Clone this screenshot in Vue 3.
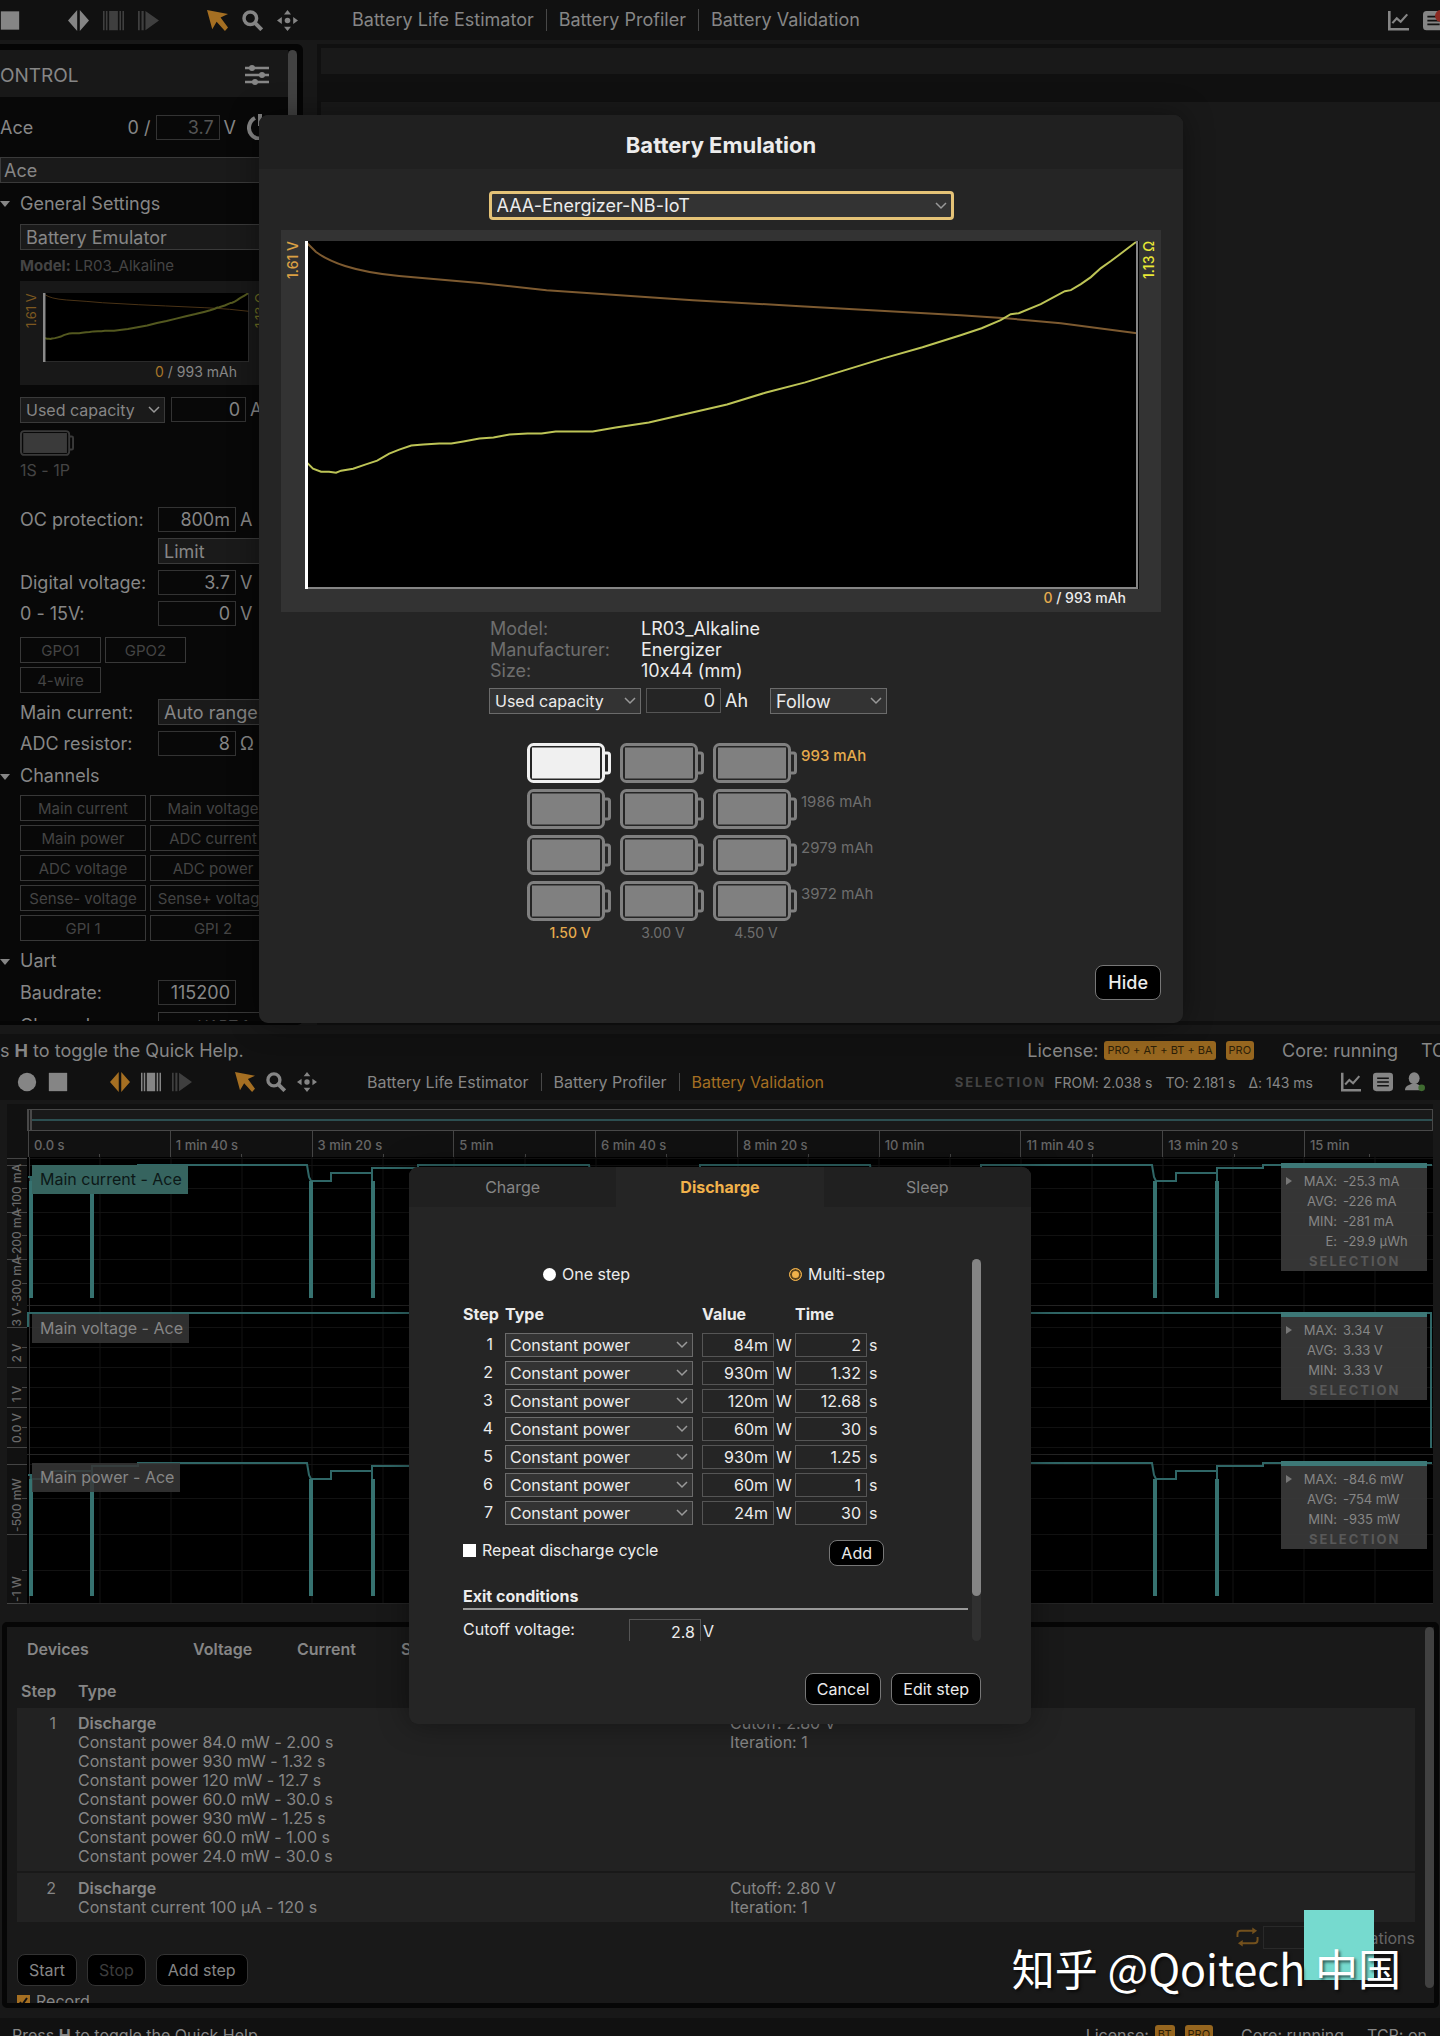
<script setup>
const channels = ['Main current', 'Main voltage', 'Main power', 'ADC current', 'ADC voltage', 'ADC power', 'Sense- voltage', 'Sense+ voltage', 'GPI 1', 'GPI 2']
const ticks = ['0.0 s', '1 min 40 s', '3 min 20 s', '5 min', '6 min 40 s', '8 min 20 s', '10 min', '11 min 40 s', '13 min 20 s', '15 min']
const packRows = ['993 mAh', '1986 mAh', '2979 mAh', '3972 mAh']
const packCols = ['1.50 V', '3.00 V', '4.50 V']
const multi = [['84m', '2'], ['930m', '1.32'], ['120m', '12.68'], ['60m', '30'], ['930m', '1.25'], ['60m', '1'], ['24m', '30']]
const steps = [
  {
    lines: ['Constant power 84.0 mW - 2.00 s', 'Constant power 930 mW - 1.32 s', 'Constant power 120 mW - 12.7 s', 'Constant power 60.0 mW - 30.0 s', 'Constant power 930 mW - 1.25 s', 'Constant power 60.0 mW - 1.00 s', 'Constant power 24.0 mW - 30.0 s'],
  },
  { lines: ['Constant current 100 µA - 120 s'] },
]

const voltageCurve = 'M2 2 L11 11 Q22 19 40 25 Q62 32 94 35 L174 42 L241 49 L387 59 L494 65 L654 74 L699 77 L754 82 L830 92'
const resistanceCurve = 'M2 221 L8 227 L16 230 L24 230 L31 231 L36 229 L48 227 L60 223 L72 219 L84 212 L94 208 L106 204 L118 203 L134 202 L146 202 L158 200 L174 197 L188 196 L204 193 L222 192 L236 192 L250 190 L272 190 L287 190 L310 186 L343 181 L382 172 L421 163 L460 151 L499 141 L538 129 L577 117 L616 106 L654 94 L675 87 L694 79 L704 73 L712 72 L734 63 L758 50 L764 49 L774 43 L784 36 L794 27 L804 20 L812 14 L829 1'

// One burst: drop, spike, two recovery steps, second spike, then back to idle.
const burst = (x) => `H${x} L${x + 2} 20 L${x + 4} 24 V141 V24 H${x + 24} V16 H${x + 65} V141 V11 H${x + 111} V8 `
const loadTrace = 'M1 20 H4 V141 V24 H24 V16 H65 V141 V11 H111 V8 ' + [280, 562, 843, 1125].map(burst).join('') + 'H1405'
const spikes = [4, 65, 284, 346, 566, 628, 847, 909, 1128, 1190]

const rows = [
  {
    name: 'Main current - Ace', trace: loadTrace, spikes, spikeTop: 14, active: true,
    major: [1, 8, 55, 102], minor: [31, 78, 126],
    labels: [['-100 mA', 31], ['-200 mA', 77], ['-300 mA', 125]],
    stats: [['MAX:', '-25.3 mA'], ['AVG:', '-226 mA'], ['MIN:', '-281 mA'], ['E:', '-29.9 µWh']],
  },
  {
    name: 'Main voltage - Ace', trace: 'M1 21 V7 H1404 V142', spikes: [], spikeTop: 0,
    major: [21, 61, 101, 141], minor: [41, 81, 121],
    labels: [['3 V', 11], ['2 V', 47], ['1 V', 88], ['0.0 V', 122]],
    stats: [['MAX:', '3.34 V'], ['AVG:', '3.33 V'], ['MIN:', '3.33 V']],
  },
  {
    name: 'Main power - Ace', trace: loadTrace, spikes, spikeTop: 14,
    major: [9, 79, 148], minor: [43, 115],
    labels: [['-500 mW', 50], ['-1 W', 134]],
    stats: [['MAX:', '-84.6 mW'], ['AVG:', '-754 mW'], ['MIN:', '-935 mW']],
  },
]
const gridX = Array.from({ length: 19 }, (_, i) => Math.round(2 + (i + 1) * 70.85))
</script>

<template>
  <svg class="defs" aria-hidden="true">
    <symbol id="i-dot" viewBox="0 0 24 24"><circle cx="12" cy="12" r="11" /></symbol>
    <symbol id="i-square" viewBox="0 0 24 24"><path d="M1 1h22v22H1z" /></symbol>
    <symbol id="i-split" viewBox="0 0 24 24"><path d="M10.500 0v24L0 12zM13.500 0v24L24 12z" /></symbol>
    <symbol id="i-bars" viewBox="0 0 24 24"><path d="M0 1h1.800v22H0zM3.300 1h1.800v22H3.300zM7 1h10v22H7zM18.800 1h1.800v22h-1.800zM22.200 1H24v22h-1.800z" /></symbol>
    <symbol id="i-step" viewBox="0 0 24 24"><path d="M0 1h2v22H0zM4 1h2.500v22H4zM8.500 1l15.500 11L8.500 23z" /></symbol>
    <symbol id="i-pointer" viewBox="0 0 24 24"><path d="M0 0l24 4.500-8.500 4L24 20l-3.500 4-9.500-10.500L6 22z" /></symbol>
    <symbol id="i-search" viewBox="0 0 24 24"><circle cx="9.500" cy="9.500" r="7.200" fill="none" stroke="currentColor" stroke-width="4" /><path d="M14.500 14.500l8 8" stroke="currentColor" stroke-width="4.500" /></symbol>
    <symbol id="i-move" viewBox="0 0 24 24"><circle cx="12" cy="12" r="3.200" /><path d="M12 0l4 5H8zM12 24l4-5H8zM0 12l5.500-4v8zM24 12l-5.500-4v8z" /></symbol>
    <symbol id="i-chart" viewBox="0 0 24 24"><path d="M1.500 1v21H24" fill="none" stroke="currentColor" stroke-width="3" /><path d="M5 15l5-5.500 4.500 4L22 5" fill="none" stroke="currentColor" stroke-width="2.500" /></symbol>
    <symbol id="i-list" viewBox="0 0 24 24"><rect x="0" y="1" width="24" height="22" rx="4" /><path d="M5 7.500h14M5 12h14M5 16.500h14" stroke="#111" stroke-width="2" /></symbol>
    <symbol id="i-user" viewBox="0 0 24 24"><ellipse cx="11" cy="7.500" rx="6.500" ry="7.200" /><path d="M0 22c0-6 5-6 8-8h6c3 2 7 2 7 8z" /><circle cx="20" cy="19" r="4" fill="#3f6b30" /></symbol>
    <symbol id="i-battery" viewBox="0 0 84 40">
      <rect x="1.500" y="1.500" width="75" height="37" rx="5" fill="none" stroke="currentColor" stroke-width="3" />
      <path d="M76.500 10h4q2 0 2 2v16q0 2-2 2h-4" fill="none" stroke="currentColor" stroke-width="3" />
      <rect x="5" y="4.500" width="68" height="31" />
    </symbol>
  </svg>

  <div class="page">
    <!-- Battery emulation screen -->
    <section class="screen">
      <header class="toolbar large">
        <div class="tools"><svg><use href="#i-square" /></svg></div>
        <div class="tools views">
          <svg><use href="#i-split" /></svg><svg class="off"><use href="#i-bars" /></svg><svg class="off"><use href="#i-step" /></svg>
        </div>
        <div class="tools modes">
          <svg class="amber"><use href="#i-pointer" /></svg><svg><use href="#i-search" /></svg><svg><use href="#i-move" /></svg>
        </div>
        <nav class="tabs"><a href="#">Battery Life Estimator</a><a href="#">Battery Profiler</a><a href="#">Battery Validation</a></nav>
        <div class="tools right">
          <svg><use href="#i-chart" /></svg>
          <span class="badged"><svg><use href="#i-list" /></svg><i></i></span>
        </div>
      </header>

      <div class="workspace">
        <aside class="control">
          <div class="control-main">
            <div class="control-head">
              <span>ONTROL</span>
              <svg viewBox="0 0 24 20"><path d="M0 3h24M0 10h24M0 17h24" stroke="currentColor" stroke-width="2.500" /><circle cx="7" cy="3" r="3" /><circle cx="17" cy="10" r="3" /><circle cx="10" cy="17" r="3" /></svg>
            </div>
            <div class="supply">
              <span>Ace</span>
              <label class="reading">0 / <input class="field w64 muted" value="3.7" aria-label="Main voltage" />V</label>
              <svg viewBox="0 0 26 26"><path d="M8 4a11 11 0 1 0 10 0" fill="none" stroke="currentColor" stroke-width="4" /><path d="M13 0v12" stroke="currentColor" stroke-width="4" /></svg>
            </div>
            <select class="select device" aria-label="Device"><option>Ace</option></select>
            <h3 class="group">General Settings</h3>
            <div class="inset">
              <select class="select" aria-label="Mode"><option>Battery Emulator</option></select>
              <p class="model"><b>Model:</b> LR03_Alkaline</p>
              <div class="mini">
                <div class="mini-row">
                  <span class="vert v">1.61 V</span>
                  <svg viewBox="0 0 832 347" preserveAspectRatio="none"><rect width="832" height="347" fill="#000" /><path :d="voltageCurve" stroke="#4a3316" /><path :d="resistanceCurve" stroke="#53581f" stroke-width="2" /><path d="M831 0V346H0" stroke="#3c3c3c" /><path class="cursor" d="M4 0V347" stroke="#8a8a8a" /></svg>
                  <span class="vert r">1.13 Ω</span>
                </div>
                <p><em>0</em> / 993 mAh</p>
              </div>
              <div class="capacity">
                <select class="select w145" aria-label="Capacity mode"><option>Used capacity</option></select>
                <label><input class="field w75" value="0" aria-label="Capacity" />Ah</label>
              </div>
              <svg class="cell"><use href="#i-battery" /></svg>
              <p class="config">1S - 1P</p>
              <div class="form">
                <label for="oc">OC protection:</label><div><input id="oc" class="field w78" value="800m" />A</div>
                <span></span><select class="select" aria-label="OC action"><option>Limit</option></select>
                <label for="dv">Digital voltage:</label><div><input id="dv" class="field w78" value="3.7" />V</div>
                <label for="rng">0 - 15V:</label><div><input id="rng" class="field w78" value="0" />V</div>
              </div>
              <div class="gpos"><button>GPO1</button><button>GPO2</button><button>4-wire</button></div>
              <div class="form">
                <label for="mc">Main current:</label><select id="mc" class="select"><option>Auto range</option></select>
                <label for="adc">ADC resistor:</label><div><input id="adc" class="field w78" value="8" />Ω</div>
              </div>
            </div>
            <h3 class="group">Channels</h3>
            <div class="inset channels"><button v-for="c in channels" :key="c">{{ c }}</button></div>
            <h3 class="group">Uart</h3>
            <div class="inset form uart">
              <label for="baud">Baudrate:</label><div><input id="baud" class="field w78" value="115200" /></div>
              <span>Channel:</span><button class="port">UART 1</button>
            </div>
          </div>
          <div class="control-scroll"></div>
        </aside>
        <main class="canvas"><div class="canvas-head"></div><div class="canvas-body"></div></main>
      </div>

      <footer class="status first">
        <p>s <b>H</b> to toggle the Quick Help.</p>
        <div class="state"><span>License:</span><mark>PRO + AT + BT + BA</mark><mark>PRO</mark><span class="core">Core: running</span><span class="tcp">TCP: on</span></div>
      </footer>

      <div class="overlay one">
        <div class="dialog emulation" role="dialog" aria-label="Battery Emulation">
          <h2>Battery Emulation</h2>
          <select class="select profile" aria-label="Battery profile"><option>AAA-Energizer-NB-IoT</option></select>
          <div class="graph">
            <div class="graph-row">
              <span class="vert v">1.61 V</span>
              <svg viewBox="0 0 832 347" preserveAspectRatio="none"><rect width="832" height="347" fill="#000" /><path :d="voltageCurve" stroke="#7d5a30" stroke-width="2" /><path :d="resistanceCurve" stroke="#bdc456" stroke-width="2" /><path d="M830 0V346H0" stroke="#858585" stroke-width="2" /><path d="M1 0V347" stroke="#fff" stroke-width="4" /></svg>
              <span class="vert r">1.13 Ω</span>
            </div>
            <p><em>0</em> / 993 mAh</p>
          </div>
          <dl><dt>Model:</dt><dd>LR03_Alkaline</dd><dt>Manufacturer:</dt><dd>Energizer</dd><dt>Size:</dt><dd>10x44 (mm)</dd></dl>
          <div class="params">
            <select class="select w152" aria-label="Capacity mode"><option>Used capacity</option></select>
            <label><input class="field w75" value="0" aria-label="Used capacity" />Ah</label>
            <select class="select w117" aria-label="Tracking"><option>Follow</option></select>
          </div>
          <div class="pack">
            <template v-for="(r, ri) in packRows" :key="r">
              <svg v-for="(c, ci) in packCols" :key="c" :class="{ lit: ri + ci === 0 }"><use href="#i-battery" /></svg>
              <span :class="{ amberlit: ri === 0 }">{{ r }}</span>
            </template>
            <small v-for="(c, ci) in packCols" :key="c" :class="{ amberlit: ci === 0 }">{{ c }}</small>
          </div>
          <div class="actions"><button class="btn big">Hide</button></div>
        </div>
      </div>
    </section>

    <!-- Battery validation screen -->
    <section class="screen">
      <header class="toolbar small">
        <div class="tools"><svg><use href="#i-dot" /></svg><svg><use href="#i-square" /></svg></div>
        <div class="tools views">
          <svg class="amber"><use href="#i-split" /></svg><svg><use href="#i-bars" /></svg><svg class="off"><use href="#i-step" /></svg>
        </div>
        <div class="tools modes">
          <svg class="amber"><use href="#i-pointer" /></svg><svg><use href="#i-search" /></svg><svg><use href="#i-move" /></svg>
        </div>
        <nav class="tabs"><a href="#">Battery Life Estimator</a><a href="#">Battery Profiler</a><a href="#" class="current">Battery Validation</a></nav>
        <p class="range"><b>SELECTION</b><span>FROM: 2.038 s</span><span>TO: 2.181 s</span><span>Δ: 143 ms</span></p>
        <div class="tools right"><svg><use href="#i-chart" /></svg><svg><use href="#i-list" /></svg><svg><use href="#i-user" /></svg></div>
      </header>

      <div class="scope">
        <div class="overview"><i></i></div>
        <div class="ruler"><span v-for="t in ticks" :key="t">{{ t }}</span></div>
        <div v-for="row in rows" :key="row.name" class="lane">
          <svg class="axis" viewBox="0 0 20 149">
            <path v-for="y in row.major" :key="'a' + y" :d="`M0 ${y}.500H20`" />
            <path v-for="y in row.minor" :key="'b' + y" :d="`M15 ${y}.500H20`" />
            <text v-for="l in row.labels" :key="l[0]" :transform="`translate(14 ${l[1]}) rotate(-90)`">{{ l[0] }}</text>
          </svg>
          <div class="plot">
            <svg viewBox="0 0 1406 149" preserveAspectRatio="none">
              <g stroke="#121212">
                <path v-for="x in gridX" :key="'x' + x" :d="`M${x} 0V149`" />
                <path v-for="y in [...row.major, ...row.minor]" :key="'y' + y" :d="`M2 ${y}.500H1406`" />
              </g>
              <path d="M0 148.500H1406" stroke="#242424" />
              <path d="M2.500 0V149" stroke="#303030" />
              <path :d="row.trace" fill="none" stroke="#2f6666" stroke-width="2" />
              <path v-for="x in row.spikes" :key="x" :d="`M${x} ${row.spikeTop + 10}V141`" stroke="#367270" stroke-width="4" />
            </svg>
            <span class="tag" :class="{ on: row.active }">{{ row.name }}</span>
            <div class="stats">
              <div v-for="s in row.stats" :key="s[0]"><span>{{ s[0] }}</span><span>{{ s[1] }}</span></div>
              <b>SELECTION</b>
            </div>
          </div>
        </div>
      </div>

      <div class="panel">
        <div class="panel-main">
          <div class="devices"><b>Devices</b><b>Voltage</b><b>Current</b><b>State</b></div>
          <table>
            <thead><tr><th>Step</th><th>Type</th><th></th></tr></thead>
            <tbody>
              <tr v-for="(s, i) in steps" :key="i">
                <td>{{ i + 1 }}</td>
                <td><b>Discharge</b><div v-for="(l, k) in s.lines" :key="k">{{ l }}</div></td>
                <td>Cutoff: 2.80 V<div>Iteration: 1</div></td>
              </tr>
            </tbody>
          </table>
          <div class="iterate">
            <svg viewBox="0 0 24 20"><path class="loop" d="M1.500 10V7q0-3.500 3.500-3.500h14M22.500 10v3q0 3.500-3.500 3.500H5" /><path d="M17 0l5 3.500L17 7zM7 13l-5 3.500L7 20z" /></svg>
            <label><input class="field" value="" aria-label="Iterations" />iterations</label>
          </div>
          <div class="run"><button class="btn">Start</button><button class="btn" disabled>Stop</button><button class="btn">Add step</button></div>
          <label class="record"><input type="checkbox" class="tick amberbox" checked />Record</label>
        </div>
        <div class="panel-scroll"></div>
      </div>

      <footer class="status second">
        <p>Press <b>H</b> to toggle the Quick Help.</p>
        <div class="state"><span>License:</span><mark>BT</mark><mark>PRO</mark><span class="core">Core: running</span><span class="tcp">TCP: on</span></div>
      </footer>

      <div class="overlay two">
        <div class="dialog step-editor" role="dialog" aria-label="Edit step">
          <div class="kinds"><button>Charge</button><button class="chosen">Discharge</button><button>Sleep</button></div>
          <div class="scroll">
            <div class="scroll-body">
              <div class="cycle-mode">
                <label><input type="radio" name="mode" />One step</label>
                <label><input type="radio" name="mode" checked />Multi-step</label>
              </div>
              <table class="multi">
                <thead><tr><th>Step</th><th>Type</th><th>Value</th><th>Time</th></tr></thead>
                <tbody>
                  <tr v-for="(m, i) in multi" :key="i">
                    <td>{{ i + 1 }}</td>
                    <td><select class="select" :aria-label="`Step ${i + 1} type`"><option>Constant power</option></select></td>
                    <td><label><input class="field w72" :value="m[0]" :aria-label="`Step ${i + 1} value`" />W</label></td>
                    <td><label><input class="field w72" :value="m[1]" :aria-label="`Step ${i + 1} time`" />s</label></td>
                  </tr>
                </tbody>
              </table>
              <div class="repeat">
                <label><input type="checkbox" class="tick" />Repeat discharge cycle</label>
                <button class="btn slim">Add</button>
              </div>
              <h4>Exit conditions</h4>
              <div class="cutoff"><label for="cut">Cutoff voltage:</label><input id="cut" class="field w72" value="2.8" />V</div>
            </div>
            <div class="track"><i></i></div>
          </div>
          <div class="actions"><button class="btn">Cancel</button><button class="btn">Edit step</button></div>
        </div>
      </div>

      <div class="brand-square"></div>
      <div class="watermark">知乎 @Qoitech 中国</div>
    </section>
  </div>
</template>

<style>
body { margin: 0; background: #181818; }
</style>

<style scoped>
* { box-sizing: border-box; }
.defs { position: absolute; width: 0; height: 0; }
.page { font-family: Inter, "Noto Sans CJK SC", sans-serif; font-size: 18px; font-feature-settings: "calt" 0; color: #868686; overflow: hidden; }
p, h2, h3, h4, dl, dd { margin: 0; }
em { font-style: normal; color: #a87628; }
svg { fill: currentColor; display: block; flex: none; }
button, input, select { font: inherit; color: inherit; margin: 0; padding: 0; }
.screen { position: relative; background: #181818; overflow: hidden; }

.toolbar { display: flex; align-items: center; background: #111; }
.toolbar.large { height: 40px; }
.toolbar.small { height: 36px; padding-left: 17px; }
.tools { display: flex; align-items: center; color: #858585; }
.tools .off { color: #3f3f3f; }
.tools .amber { color: #a56f22; }
.large .tools svg { width: 21px; height: 21px; }
.small .tools svg { width: 20px; height: 20px; }
.large .tools { gap: 14px; }
.small .tools { gap: 11px; }
.large .tools:first-child svg { width: 20px; }
.large .views { margin-left: 48px; }
.large .modes { margin-left: 48px; }
.small .views { margin-left: 42px; }
.small .modes { margin-left: 43px; }
.tabs { display: flex; align-items: center; }
.tabs a { color: inherit; text-decoration: none; border-left: 1px solid #484848; }
.tabs a.current { color: #a56f22; }
.large .tabs { margin-left: 41px; font-size: 18px; }
.large .tabs a { padding: 0 12px; line-height: 22px; }
.small .tabs { margin-left: 37px; font-size: 16px; }
.small .tabs a { padding: 0 12px; line-height: 18px; }
.toolbar .tabs a:first-child { border-color: transparent; }
.tools.right { margin-left: auto; }
.large .tools.right { margin-right: -4px; }
.badged { position: relative; }
.badged i { position: absolute; top: 0; right: -3px; width: 12px; height: 12px; border-radius: 6px; background: #8c2a22; }
.range { display: flex; gap: 13px; margin-left: auto; font-size: 14px; }
.range b { color: #444; letter-spacing: 2px; margin-right: -5px; font-size: 13px; line-height: 17px; }
.small .tools.right { margin-left: 28px; margin-right: 15px; gap: 12px; }

.select { appearance: none; display: block; height: 26px; border: 1px solid #3a3a3a; border-radius: 0; padding: 0 5px; color: inherit;
  background: #1a1a1a url("data:image/svg+xml,%3Csvg xmlns='http://www.w3.org/2000/svg' width='12' height='8'%3E%3Cpath d='M1 1l5 5 5-5' fill='none' stroke='%23999' stroke-width='1.500'/%3E%3C/svg%3E") no-repeat right 4px center; }
.field { height: 25px; border: 1px solid #333; background: transparent; text-align: right; padding: 0 5px; margin-right: 4px; outline: 0; }
.field.muted { color: #555; }
.w64 { width: 64px; }
.w72 { width: 72px; }
.w75 { width: 75px; }
.w78 { width: 78px; }
.w117 { width: 117px; }
.w145 { width: 145px; font-size: 16px; }
.w152 { width: 152px; font-size: 16px; }

.workspace { display: flex; gap: 14px; padding-top: 4px; }
.control { display: flex; width: 303px; height: 981px; flex: none; background: #050505; padding: 6px 6px 4px 0; border-radius: 0 6px 6px 0; }
.control-main { flex: 1; overflow: hidden; white-space: nowrap; background: #080808; }
.control-scroll { width: 9px; border-radius: 5px; background: #424242; height: 340px; }
.control-head { display: flex; justify-content: space-between; align-items: center; height: 47px; padding: 3px 19px 0 0; background: #181818; font-size: 19px; }
.control-head svg { width: 24px; height: 20px; }
.supply { display: flex; align-items: center; height: 60px; }
.supply .reading { margin-left: auto; margin-right: 11px; }
.supply svg { width: 26px; height: 26px; margin-right: 15px; }
.device { width: 100%; padding-left: 3px; }
.group { position: relative; display: flex; align-items: center; height: 41px; padding-left: 20px; font-size: 18px; font-weight: 400; }
.inset + .group { height: 39px; }
.group::before { content: ""; position: absolute; left: 0; top: 18px; border: 5px solid transparent; border-top: 6px solid #868686; border-bottom: 0; }
.inset { padding-left: 20px; }
.inset > .select { width: 100%; }
.model { font-size: 15px; line-height: 31px; color: #444; }
.mini { background: #181818; height: 104px; padding: 12px 0 0 4px; }
.mini-row { display: flex; gap: 4px; }
.mini svg { width: 206px; height: 69px; }
.mini svg path, .graph svg path { fill: none; vector-effect: non-scaling-stroke; }
.mini .cursor { stroke-width: 3; }
.mini p { font-size: 14px; line-height: 19px; width: 213px; text-align: right; }
.vert { writing-mode: vertical-rl; transform: rotate(180deg); text-align: right; line-height: 15px; }
.mini .vert { font-size: 13px; }
.mini .v { color: #7d5820; }
.mini .r { color: #6c6c22; }
.capacity { display: flex; gap: 6px; padding-top: 12px; height: 38px; }
.cell { width: 54px; height: 26px; margin-top: 7px; color: #3a3a3a; }
.config { font-size: 16px; line-height: 28px; color: #444; height: 51px; }
.form { display: grid; grid-template-columns: 138px 1fr; row-gap: 6px; align-items: center; }
.form > * { height: 25px; line-height: 25px; }
.form > .select { height: 26px; }
.form > div { display: flex; }
.gpos, .channels { display: grid; gap: 4px; }
.gpos { grid-template-columns: 81px 81px; padding: 11px 0 6px; }
.gpos button, .channels button, .port { height: 26px; border: 1px solid #383838; background: none; color: #444; font-size: 15px; }
.channels { grid-template-columns: 126px 126px; }
.uart { row-gap: 7px; }

.canvas { flex: 1; display: flex; flex-direction: column; background: #101010; padding: 4px 0 4px 4px; }
.canvas-head { height: 26px; background: #191919; }
.canvas-body { flex: 1; margin-top: 28px; background: #191919; }

.status { display: flex; justify-content: space-between; background: #111; }
.status.first { height: 30px; margin-top: 9px; line-height: 34px; }
.status.second { height: 18px; overflow: hidden; line-height: 34px; font-size: 16px; padding: 0 13px 0 12px; }
.state { display: flex; white-space: nowrap; }
mark { align-self: flex-start; background: #96661f; color: #2c2008; border-radius: 3px; font-size: 11px; line-height: 19px; padding: 0 3px; margin: 7px 0 0 10px; }
.state span + mark { margin-left: 6px; }
.core { margin-left: 28px; }
.tcp { margin-left: 23px; }
.first .tcp { width: 19px; overflow: hidden; }

.overlay { position: absolute; inset: 0; display: flex; justify-content: center; align-items: flex-start; }
.overlay.one { padding: 115px 0 0 2px; }
.overlay.two { padding-top: 103px; }
.dialog { background: #252525; color: #ececec; overflow: hidden; box-shadow: 0 0 30px rgba(0, 0, 0, .4); border-radius: 9px; }
.dialog .select { border-color: #6b6b6b; background-color: #333; }
.dialog .field { border-color: #555; }
.emulation { width: 924px; padding-bottom: 23px; }
.emulation h2 { background: #202020; text-align: center; font-size: 22px; line-height: 60px; height: 54px; font-weight: 700; }
.dialog .profile { width: 465px; height: 29px; margin: 22px auto 10px; border: 3px solid #e5c377; border-radius: 4px; }
.graph { margin: 0 22px; height: 382px; background: #333; padding: 11px 2px 0 4px; }
.graph-row { display: flex; }
.graph svg { flex: 1; min-width: 0; height: 348px; }
.graph .vert { font-size: 14px; width: 20px; font-weight: 500; }
.graph .v { color: #dba044; }
.graph .r { color: #e9e935; line-height: 20px; }
.graph p { text-align: right; font-size: 14px; line-height: 18px; padding-right: 33px; font-weight: 500; }
.graph em, .amberlit { color: #e5ab4d; }
dl { display: grid; grid-template-columns: 151px 1fr; margin: 6px 0 7px 231px; line-height: 21px; }
dt { color: #6e6e6e; }
.params { display: flex; margin-left: 230px; gap: 5px; height: 28px; }
.params label { width: 119px; }
.pack { display: grid; grid-template-columns: repeat(3, 93px) 1fr; grid-auto-rows: 46px; margin: 27px 0 0 268px; color: #808080; font-size: 15px; }
.pack svg { width: 84px; height: 40px; }
.pack .lit { color: #f0f0f0; }
.pack span { line-height: 26px; margin-left: -5px; }
.pack span, .pack small { color: #6e6e6e; }
.pack small { width: 86px; text-align: center; font-size: 14px; line-height: 12px; }
.pack .amberlit { color: #e5ab4d; font-weight: 500; }
.btn { height: 32px; border: 1px solid #777; border-radius: 8px; background: #000; padding: 0 11px; }
.actions { display: flex; justify-content: flex-end; gap: 10px; }
.emulation .actions { padding-right: 22px; margin-top: -8px; }
.btn.big { height: 35px; padding: 0 12px; font-weight: 500; }

.scope { background: #111; border: solid #181818; border-width: 4px 7px 6px 7px; padding-top: 5px; }
.overview { margin-left: 20px; height: 22px; border: 1px solid #484848; border-left: 5px double #484848; background: #191919; }
.overview i { display: block; height: 11px; border-bottom: 2px solid #2c4f51; }
.ruler { display: grid; grid-template-columns: repeat(9, 1fr) .91fr; margin-left: 21px; height: 26px; font-size: 13px; line-height: 28px; font-weight: 500; color: #666; }
.ruler span { position: relative; border-left: 1px solid #444; padding-left: 5px; }
.ruler span::after { content: ""; position: absolute; left: 50%; bottom: 0; height: 5px; border-left: 1px solid #444; }
.lane { display: flex; height: 149px; }
.axis { width: 20px; height: 149px; font-size: 12px; color: #6a6a6a; }
.axis path { stroke: #444; }
.axis text { text-anchor: middle; font-weight: 500; }
.plot { position: relative; flex: 1; background: #000; }
.plot svg { width: 100%; height: 100%; }
.plot path { vector-effect: non-scaling-stroke; }
.tag { position: absolute; left: 5px; top: 8px; line-height: 29px; padding: 0 6px 0 8px; font-size: 16px; background: rgba(55, 55, 55, .85); }
.tag.on { background: #36645f; color: #0c1817; }
.stats { position: absolute; right: 6px; top: 6px; width: 146px; border-top: 5px solid #3d7877; background: rgba(56, 56, 56, .94); padding: 3px 0 0; font-size: 13px; line-height: 20px; }
.stats::before { content: ""; position: absolute; left: 5px; top: 9px; border: 4px solid transparent; border-left: 6px solid #777; border-right: 0; }
.stats div { display: grid; grid-template-columns: 56px 1fr; gap: 6px; }
.stats div span:first-child { text-align: right; }
.stats b { display: block; padding-left: 28px; letter-spacing: 2px; color: #595959; }

.panel { display: flex; height: 386px; margin: 12px 1px 10px 2px; border: 5px solid #060606; border-radius: 5px; background: #191919; }
.panel-main { flex: 1; overflow: hidden; padding: 13px 10px 0; font-size: 16px; line-height: 19px; }
.panel-scroll { width: 9px; height: 361px; border-radius: 5px; background: #414141; }
.devices { display: flex; padding-left: 10px; height: 42px; }
.devices b { width: 104px; font-weight: 600; }
.devices b:first-child { width: 166px; }
.panel table { width: 100%; border-collapse: collapse; table-layout: fixed; }
.panel th { text-align: left; font-weight: 600; height: 26px; padding: 0 4px 7px; }
.panel th:first-child { width: 57px; }
.panel th:nth-child(2) { width: 652px; }
.panel td { vertical-align: top; padding: 6px 4px 5px; background: #222; border-bottom: 2px solid #191919; }
.panel td b { font-weight: 600; }
.panel td:first-child { text-align: right; padding-right: 18px; }
.iterate { display: flex; justify-content: flex-end; align-items: center; gap: 4px; height: 26px; color: #666; }
.iterate svg { width: 23px; height: 20px; color: #74511d; }
.iterate .loop { fill: none; stroke: currentColor; stroke-width: 2; }
.iterate .field { width: 78px; height: 23px; border-color: #292929; }
.run { display: flex; gap: 10px; margin-top: 4px; }
.run .btn { border-color: #333; }
.run .btn:disabled { color: #3c3c3c; }
.record { display: flex; align-items: center; gap: 6px; margin-top: 6px; }
.tick { appearance: none; width: 13px; height: 13px; background: #fff; }
.amberbox { background: #a56f22 url("data:image/svg+xml,%3Csvg xmlns='http://www.w3.org/2000/svg' width='13' height='13'%3E%3Cpath d='M3 7l2 3 5-7' fill='none' stroke='%23111' stroke-width='2'/%3E%3C/svg%3E"); }

.step-editor { width: 622px; padding-bottom: 19px; font-size: 16px; }
.kinds { display: grid; grid-template-columns: repeat(3, 1fr); height: 40px; background: #202020; }
.kinds button { border: 0; background: none; color: #858585; }
.kinds .chosen { background: #252525; color: #f1b24b; font-weight: 700; }
.scroll { display: flex; justify-content: space-between; margin: 52px 50px 32px 54px; height: 382px; overflow: hidden; }
.scroll-body { width: 505px; }
.cycle-mode { display: grid; grid-template-columns: 246px auto; padding: 5px 0 0 80px; line-height: 20px; }
.cycle-mode label { display: flex; align-items: center; gap: 6px; }
.cycle-mode input { appearance: none; width: 13px; height: 13px; border-radius: 50%; background: #fff; }
.cycle-mode input:checked { background: #f1b24b; border: 1px solid #f1b24b; box-shadow: inset 0 0 0 2px #5a421b; }
.multi { border-collapse: collapse; margin-top: 18px; }
.multi th { text-align: left; padding: 0; height: 31px; vertical-align: top; line-height: 25px; font-weight: 700; }
.multi td { padding: 0; height: 28px; vertical-align: top; }
.multi td:first-child { text-align: right; width: 42px; padding-right: 12px; line-height: 22px; }
.multi td:nth-child(2) { width: 197px; }
.multi td:nth-child(3) { width: 93px; }
.multi .select { width: 188px; height: 24px; padding-left: 4px; }
.multi label { display: flex; line-height: 24px; }
.multi .field { height: 24px; margin-right: 2px; }
.repeat { display: flex; justify-content: space-between; align-items: flex-end; width: 421px; height: 28px; margin-top: 9px; line-height: 24px; }
.repeat label { display: flex; align-items: center; align-self: flex-start; gap: 6px; }
.btn.slim { height: 26px; }
h4 { font-size: 16px; line-height: 24px; padding-top: 18px; height: 44px; border-bottom: 2px solid #999; }
.cutoff { display: flex; padding-top: 9px; line-height: 24px; }
.cutoff label { width: 166px; line-height: 20px; }
.cutoff .field { margin-right: 2px; }
.track { width: 9px; background: #303030; border-radius: 5px; }
.track i { display: block; height: 337px; border-radius: 5px; background: #858585; }
.step-editor .actions { padding-right: 50px; }

.brand-square { position: absolute; right: 66px; bottom: 56px; width: 70px; height: 70px; background: #76dacf; }
.watermark { position: absolute; right: 39px; bottom: 39px; font: 43px/60px "Noto Sans CJK SC", sans-serif; color: #fff; text-shadow: 2px 2px 3px rgba(0, 0, 0, .6); white-space: nowrap; }
</style>
